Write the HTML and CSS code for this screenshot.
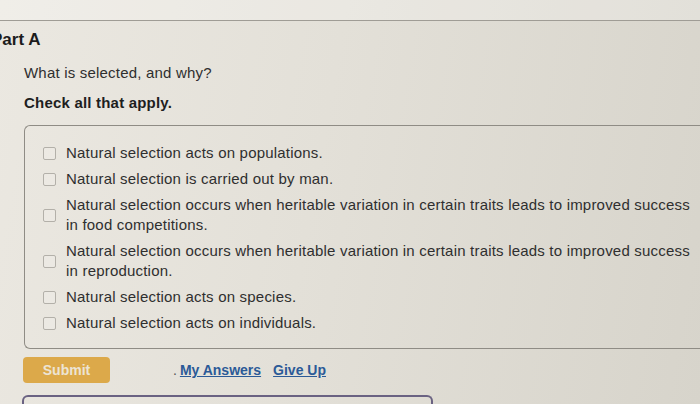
FILE: index.html
```html
<!DOCTYPE html>
<html>
<head>
<meta charset="utf-8">
<link rel="stylesheet" href="styles.css">
</head>
<body>
<div class="page">
  <div class="topbar"></div>
  <h2 class="part-title">Part A</h2>
  <div class="content">
    <p class="question">What is selected, and why?</p>
    <p class="instruction">Check all that apply.</p>
    <div class="options">
      <label class="option"><span class="box"></span><span class="text">Natural selection acts on populations.</span></label>
      <label class="option"><span class="box"></span><span class="text">Natural selection is carried out by man.</span></label>
      <label class="option"><span class="box"></span><span class="text">Natural selection occurs when heritable variation in certain traits leads to improved success in food competitions.</span></label>
      <label class="option"><span class="box"></span><span class="text">Natural selection occurs when heritable variation in certain traits leads to improved success in reproduction.</span></label>
      <label class="option"><span class="box"></span><span class="text">Natural selection acts on species.</span></label>
      <label class="option"><span class="box"></span><span class="text">Natural selection acts on individuals.</span></label>
    </div>
    <div class="actions">
      <button class="submit">Submit</button>
      <div class="links"><span class="dot">.</span><a href="#" class="link">My Answers</a><a href="#" class="link">Give Up</a></div>
    </div>
    <div class="next-box"></div>
  </div>
</div>
</body>
</html>
```
FILE: styles.css
```css
html, body {
  margin: 0;
  padding: 0;
  width: 700px;
  height: 404px;
  overflow: hidden;
}
body {
  font-family: "Liberation Sans", Arial, sans-serif;
  color: #2f2f2f;
  background: linear-gradient(100deg, #ebe8e1 0%, #e3e0d8 45%, #d7d4cb 100%);
}
.page {
  width: 760px;
}
.topbar {
  height: 20px;
  background: rgba(255, 255, 255, 0.25);
  border-bottom: 1px solid #9f9c95;
}
.part-title {
  margin: 9px 0 0 -9px;
  font-size: 17px;
  line-height: 20px;
  font-weight: bold;
  color: #1c1c1c;
}
.content {
  padding-left: 24px;
}
.question {
  margin: 13px 0 0 0;
  font-size: 15px;
  letter-spacing: 0.2px;
  line-height: 20px;
}
.instruction {
  margin: 10px 0 0 0;
  font-size: 15px;
  letter-spacing: 0.2px;
  line-height: 20px;
  font-weight: bold;
  color: #1e1e1e;
}
.options {
  margin-top: 12px;
  border: 1px solid #8f8c85;
  border-right: none;
  border-radius: 6px 0 0 6px;
  padding: 17px 0 15px 18px;
  display: flex;
  flex-direction: column;
  gap: 6px;
}
.option {
  display: flex;
  align-items: center;
  gap: 10px;
  font-size: 15px;
  letter-spacing: 0.2px;
  line-height: 20px;
}
.box {
  flex: none;
  width: 11px;
  height: 11px;
  border: 1px solid #b3b0a9;
  border-radius: 2px;
  background: rgba(255, 255, 255, 0.15);
}
.text {
  max-width: 631px;
}
.actions {
  margin-top: 8px;
  display: flex;
  align-items: center;
}
.submit {
  margin-left: -1px;
  width: 87px;
  height: 26px;
  border: none;
  border-radius: 4px;
  background: #dca94a;
  color: #ece4d4;
  font-family: "Liberation Sans", Arial, sans-serif;
  font-size: 14px;
  font-weight: bold;
  padding: 0;
}
.links {
  margin-left: 63px;
  display: flex;
  align-items: center;
  gap: 12px;
  font-size: 14px;
  font-weight: bold;
}
.dot {
  margin-right: -9px;
  color: #555;
  font-weight: normal;
}
.link {
  color: #2b5a97;
  text-decoration: underline;
}
.next-box {
  margin: 12px 0 0 -2px;
  width: 407px;
  height: 20px;
  border: 2px solid #6a6282;
  border-bottom: none;
  border-radius: 6px 6px 0 0;
}
```
